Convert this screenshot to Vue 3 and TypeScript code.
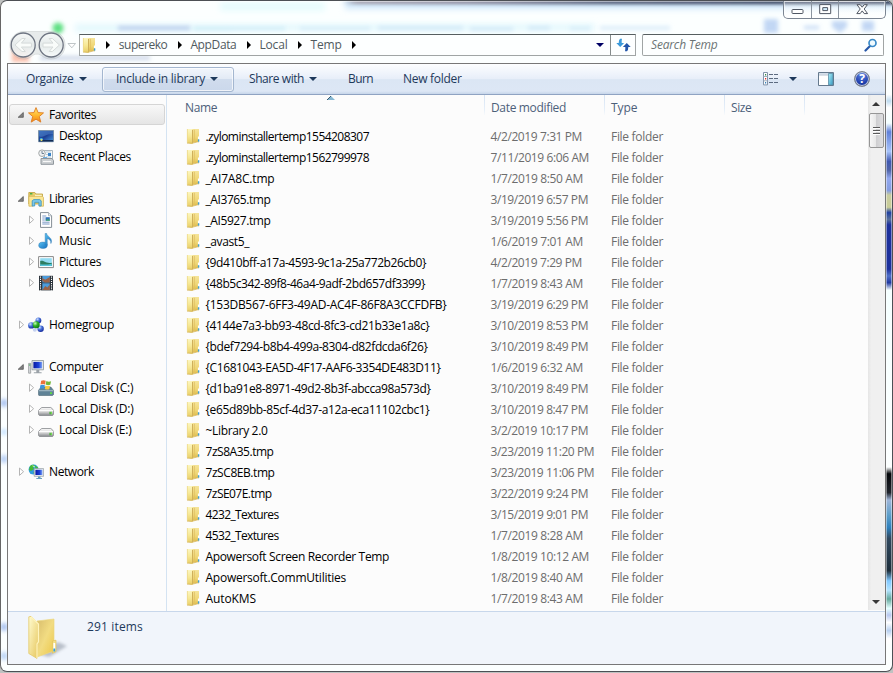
<script setup lang="ts">
interface TreeItem {
  label: string
  width: number
  icon: string
  level: 0 | 1
  arrow: 'open' | 'closed' | 'none'
  selected?: boolean
}

interface Entry {
  name: string
  width: number
  date: string
  dateWidth: number
}

// Tightens or loosens tracking so a label occupies a given width in pixels.
const vFit = {
  mounted(el: HTMLElement, binding: { value: number }) {
    const natural = el.getBoundingClientRect().width
    const count = (el.textContent ?? '').length
    if (count > 0) el.style.letterSpacing = `${((binding.value - natural) / count).toFixed(3)}px`
  },
}

const crumbs = [
  { label: 'supereko', width: 48.5 },
  { label: 'AppData', width: 46 },
  { label: 'Local', width: 28 },
  { label: 'Temp', width: 31 },
]

const groups: TreeItem[][] = [
  [
    { label: 'Favorites', width: 47, icon: 'star', level: 0, arrow: 'open', selected: true },
    { label: 'Desktop', width: 43, icon: 'desktop', level: 1, arrow: 'none' },
    { label: 'Recent Places', width: 72, icon: 'recent', level: 1, arrow: 'none' },
  ],
  [
    { label: 'Libraries', width: 44, icon: 'libraries', level: 0, arrow: 'open' },
    { label: 'Documents', width: 61, icon: 'document', level: 1, arrow: 'closed' },
    { label: 'Music', width: 32, icon: 'music', level: 1, arrow: 'closed' },
    { label: 'Pictures', width: 42, icon: 'pictures', level: 1, arrow: 'closed' },
    { label: 'Videos', width: 35, icon: 'videos', level: 1, arrow: 'closed' },
  ],
  [{ label: 'Homegroup', width: 65, icon: 'homegroup', level: 0, arrow: 'closed' }],
  [
    { label: 'Computer', width: 54, icon: 'computer', level: 0, arrow: 'open' },
    { label: 'Local Disk (C:)', width: 74.5, icon: 'systemdisk', level: 1, arrow: 'closed' },
    { label: 'Local Disk (D:)', width: 74.5, icon: 'disk', level: 1, arrow: 'closed' },
    { label: 'Local Disk (E:)', width: 72.5, icon: 'disk', level: 1, arrow: 'closed' },
  ],
  [{ label: 'Network', width: 45, icon: 'network', level: 0, arrow: 'closed' }],
]

const entries: Entry[] = [
  { name: '.zylominstallertemp1554208307', width: 163.5, date: '4/2/2019 7:31 PM', dateWidth: 91.5 },
  { name: '.zylominstallertemp1562799978', width: 163.5, date: '7/11/2019 6:06 AM', dateWidth: 98.5 },
  { name: '_AI7A8C.tmp', width: 69, date: '1/7/2019 8:50 AM', dateWidth: 92.5 },
  { name: '_AI3765.tmp', width: 65, date: '3/19/2019 6:57 PM', dateWidth: 97.5 },
  { name: '_AI5927.tmp', width: 65, date: '3/19/2019 5:56 PM', dateWidth: 97.5 },
  { name: '_avast5_', width: 43.5, date: '1/6/2019 7:01 AM', dateWidth: 92.5 },
  { name: '{9d410bff-a17a-4593-9c1a-25a772b26cb0}', width: 220.5, date: '4/2/2019 7:29 PM', dateWidth: 91.5 },
  { name: '{48b5c342-89f8-46a4-9adf-2bd657df3399}', width: 219.5, date: '1/7/2019 8:43 AM', dateWidth: 92.5 },
  { name: '{153DB567-6FF3-49AD-AC4F-86F8A3CCFDFB}', width: 241, date: '3/19/2019 6:29 PM', dateWidth: 97.5 },
  { name: '{4144e7a3-bb93-48cd-8fc3-cd21b33e1a8c}', width: 224, date: '3/10/2019 8:53 PM', dateWidth: 97.5 },
  { name: '{bdef7294-b8b4-499a-8304-d82fdcda6f26}', width: 222, date: '3/10/2019 8:49 PM', dateWidth: 97.5 },
  { name: '{C1681043-EA5D-4F17-AAF6-3354DE483D11}', width: 235, date: '1/6/2019 6:32 AM', dateWidth: 92.5 },
  { name: '{d1ba91e8-8971-49d2-8b3f-abcca98a573d}', width: 225, date: '3/10/2019 8:49 PM', dateWidth: 97.5 },
  { name: '{e65d89bb-85cf-4d37-a12a-eca11102cbc1}', width: 224, date: '3/10/2019 8:47 PM', dateWidth: 97.5 },
  { name: '~Library 2.0', width: 62, date: '3/2/2019 10:17 PM', dateWidth: 97.5 },
  { name: '7zS8A35.tmp', width: 68, date: '3/23/2019 11:20 PM', dateWidth: 103.5 },
  { name: '7zSC8EB.tmp', width: 69, date: '3/23/2019 11:06 PM', dateWidth: 103.5 },
  { name: '7zSE07E.tmp', width: 66, date: '3/22/2019 9:24 PM', dateWidth: 97.5 },
  { name: '4232_Textures', width: 73, date: '3/15/2019 9:01 PM', dateWidth: 97.5 },
  { name: '4532_Textures', width: 73, date: '1/7/2019 8:28 AM', dateWidth: 92.5 },
  { name: 'Apowersoft Screen Recorder Temp', width: 183.5, date: '1/8/2019 10:12 AM', dateWidth: 98.5 },
  { name: 'Apowersoft.CommUtilities', width: 140.5, date: '1/8/2019 8:40 AM', dateWidth: 92.5 },
  { name: 'AutoKMS', width: 50.5, date: '1/7/2019 8:43 AM', dateWidth: 92.5 },
]
</script>

<template>
  <div class="desktop">
    <!-- Shared icon artwork -->
    <svg class="defs" width="0" height="0" aria-hidden="true">
      <defs>
        <linearGradient id="gFold" x1="0" y1="0" x2="1" y2="1"><stop offset="0" stop-color="#fffbd0" /><stop offset="1" stop-color="#e6c65c" /></linearGradient>
        <linearGradient id="gLeaf" x1="0" y1="0" x2="0" y2="1"><stop offset="0" stop-color="#fcf6c0" /><stop offset=".5" stop-color="#f7e894" /><stop offset="1" stop-color="#e8cd66" /></linearGradient>
        <linearGradient id="gLeafBack" x1="0" y1="0" x2="0" y2="1"><stop offset="0" stop-color="#f5e49a" /><stop offset=".6" stop-color="#efd674" /><stop offset="1" stop-color="#dfbb4a" /></linearGradient>
        <linearGradient id="gFoldBack" x1="0" y1="0" x2="1" y2="1"><stop offset="0" stop-color="#d8bd6c" /><stop offset=".5" stop-color="#f2dc82" /><stop offset="1" stop-color="#ecc748" /></linearGradient>
        <linearGradient id="gStar" x1="0" y1="0" x2="0" y2="1"><stop offset="0" stop-color="#ffe878" /><stop offset=".55" stop-color="#ffb62c" /><stop offset="1" stop-color="#f08018" /></linearGradient>
        <linearGradient id="gBlue" x1="0" y1="0" x2="1" y2="1"><stop offset="0" stop-color="#2a62b8" /><stop offset=".5" stop-color="#1c3f94" /><stop offset="1" stop-color="#4c9ce0" /></linearGradient>
        <linearGradient id="gScreen" x1="0" y1="0" x2="1" y2="0"><stop offset="0" stop-color="#0818a0" /><stop offset=".6" stop-color="#1c40d8" /><stop offset="1" stop-color="#7ea4f4" /></linearGradient>
        <linearGradient id="gNote" x1="0" y1="0" x2="1" y2="1"><stop offset="0" stop-color="#58c0f0" /><stop offset="1" stop-color="#1670c0" /></linearGradient>
        <linearGradient id="gDisk" x1="0" y1="0" x2="0" y2="1"><stop offset="0" stop-color="#fafafa" /><stop offset=".5" stop-color="#dadada" /><stop offset="1" stop-color="#85888c" /></linearGradient>
        <linearGradient id="gPane" x1="0" y1="0" x2="1" y2="1"><stop offset="0" stop-color="#a8ecf6" /><stop offset="1" stop-color="#389cc4" /></linearGradient>
        <radialGradient id="gBallB" cx=".35" cy=".3" r=".7"><stop offset="0" stop-color="#cde0ff" /><stop offset=".5" stop-color="#4870d8" /><stop offset="1" stop-color="#1830a0" /></radialGradient>
        <radialGradient id="gBallG" cx=".35" cy=".3" r=".7"><stop offset="0" stop-color="#c8ffb8" /><stop offset=".5" stop-color="#30b028" /><stop offset="1" stop-color="#108010" /></radialGradient>
        <linearGradient id="gNav" x1="0" y1="0" x2="0" y2="1"><stop offset="0" stop-color="#f8faf9" /><stop offset=".5" stop-color="#e4eaea" /><stop offset="1" stop-color="#f8fbfb" /></linearGradient>
      </defs>

      <symbol id="i-folder" viewBox="0 0 16 16">
        <path d="M6 1h7v12.500L6 15z" fill="url(#gLeafBack)" />
        <path d="M1 1h4.800l.9 1v13.700H5L1 14.800z" fill="url(#gLeaf)" />
        <path d="M1.400 1v13.800" stroke="#ecd98c" stroke-width=".8" />
        <path d="M6.500 2v13.200" stroke="#cfb05a" stroke-width="1" />
        <path d="M8.400 1.800v11.800" stroke="#dfc062" stroke-width=".8" />
        <path d="M1 15.200h5.500l5-1.300h1.500" fill="none" stroke="#d2b254" stroke-width=".7" />
        <path d="M12.600 8.500v3" stroke="#fff" stroke-width="1.400" /><path d="M12.600 11.300v2.300" stroke="#3b9fd6" stroke-width="1.400" />
      </symbol>
      <symbol id="i-star" viewBox="0 0 16 16"><path d="m8 .6 2.100 5 5.400.3-4.200 3.600 1.500 5.600L8 12.200l-4.800 2.900 1.500-5.600L.5 5.900l5.400-.3z" fill="url(#gStar)" stroke="#df7c20" stroke-width=".9" stroke-linejoin="round" /></symbol>
      <symbol id="i-desktop" viewBox="0 0 16 16">
        <path d="M.5 2.500h15v11.200H.5z" fill="url(#gBlue)" stroke="#7b91a8" />
        <path d="M1 3v5c3 3 7-3 14-2V3z" fill="#5387cc" opacity=".5" />
        <path d="M1 12h14v1.500H1z" fill="#112b55" /><path d="m1.500 12.500 1-2.500 2 .3.500 1.700z" fill="#48bce8" /><circle cx="3.500" cy="12" r="1" fill="#f4df64" />
      </symbol>
      <symbol id="i-recent" viewBox="0 0 16 16">
        <path d="M6.500 1.500h8v9h-8z" fill="#f6fafc" stroke="#a9b5bd" /><path d="M8 3h5M8 5.500h5M8 8h5" stroke="#b9cbd8" />
        <path d="M10 4h3v3h-3z" fill="#3984ca" /><path d="M5 8h4v3H5z" fill="#6eaddf" />
        <path d="M3 9.500h11l1.500 2v3.800H3z" fill="#ccd0d3" stroke="#8f979d" /><path d="M5 12h8v1H5z" fill="#f9f9f9" />
        <circle cx="4" cy="4.200" r="3.300" fill="#eef1f3" stroke="#a4a8a8" /><path d="M4 2v2.500h2" fill="none" stroke="#718394" />
      </symbol>
      <symbol id="i-libraries" viewBox="0 0 16 16">
        <path d="M.8 3V1.500h6L8 3h6.500v10H.8z" fill="#e9cf6b" stroke="#bd9f3d" stroke-width=".8" />
        <path d="M2 2.800h2.400" stroke="#25a83f" stroke-width="1.200" /><path d="M7 3.800h6.800v2H7z" fill="#fffbd7" />
        <path d="M.8 5.300h13.700l1 1.200v8.700h-4v-4q0-1.400-3.300-1.400t-3.300 1.400v4h-4z" fill="#fbe693" stroke="#cfaf50" stroke-width=".7" />
        <path d="M4.200 15V9.800l1.600-1.200h6l1.400 1.200V15h-2.300v-3.700H6.700V15z" fill="#7cc8ea" stroke="#3890c0" stroke-width=".8" />
      </symbol>
      <symbol id="i-document" viewBox="0 0 16 16">
        <path d="M2.500.6h8l3.100 3V15.400H2.500z" fill="#fff" stroke="#858e96" /><path d="M10.500.6v3.200h3.100" fill="#e4eaf0" stroke="#9aa2aa" stroke-width=".7" />
        <path d="M4.300 4h4M4.300 6h2.500M4.300 8h2.500M4.300 10.200h7.300M4.300 12h7.300" stroke="#6c8cc0" stroke-width=".9" />
        <path d="M7.500 5.200h4.300v3.500H7.500z" fill="#2f74b8" /><path d="M7.500 8.700 9.300 7l2.500.7v1z" fill="#42a668" />
      </symbol>
      <symbol id="i-music" viewBox="0 0 16 16">
        <ellipse cx="5" cy="12.300" rx="4.300" ry="3.200" fill="url(#gNote)" stroke="#2a70aa" stroke-width=".4" />
        <path d="M7.200.4h1.400c.3 3.500 6.800 4.200 4.300 10.100.4-3.500-2.100-4.500-3.700-5v6.400H7.200z" fill="url(#gNote)" stroke="#2b78b3" stroke-width=".5" />
      </symbol>
      <symbol id="i-pictures" viewBox="0 0 16 16">
        <path d="M.6 2.600h14.800v11H.6z" fill="#fff" stroke="#898989" /><path d="M2.200 4.200h11.600v7.900H2.200z" fill="#92dbf2" />
        <path d="M2.200 7c4-1 5 3 11.600 1.800v3.300H2.200z" fill="#2c7d60" /><path d="M2.200 10.200q5 1 11.600-.5v2.400H2.200z" fill="#54c3d8" />
      </symbol>
      <symbol id="i-videos" viewBox="0 0 16 16">
        <path d="M1 .8h14v14.600H1z" fill="#293139" /><path d="M4.300 1h7.500v6.500H4.300zM4.300 8.300h7.500v6.800H4.300z" fill="#4c9bda" />
        <path d="m4.300 3 3 1.800L11.800 2v5.500H7L4.300 6zm0 12 3-4 2 1.500 2.500-3v5.600z" fill="#9a6247" />
        <path d="M2.500 1.500v14M13.500 1.500v14" stroke="#fff" stroke-width="1.100" stroke-dasharray="1.200 1" />
      </symbol>
      <symbol id="i-homegroup" viewBox="0 0 16 16">
        <circle cx="10.400" cy="3.400" r="2.900" fill="url(#gBallB)" /><circle cx="3.300" cy="8.400" r="3.200" fill="url(#gBallB)" /><circle cx="12.600" cy="11.700" r="3.200" fill="url(#gBallB)" /><circle cx="6.800" cy="12.800" r="2" fill="#c5d1f0" />
        <circle cx="8.200" cy="7.800" r="3.500" fill="url(#gBallG)" />
      </symbol>
      <symbol id="i-computer" viewBox="0 0 16 16">
        <path d="M.6 4.400h2.100v9.800H.6z" fill="#d7dadd" stroke="#8c8f91" stroke-width=".7" /><path d="M1.100 6h1.200" stroke="#27a83c" />
        <path d="M4 1.500h11.500v9.300H4z" fill="#e4e8eb" stroke="#8a9398" stroke-width=".8" /><path d="M5.400 2.900h8.700v6.400H5.400z" fill="url(#gScreen)" />
        <path d="M8.300 11h3v2.200h2.300v1H5.800v-1h2.500z" fill="#9ba2a8" />
      </symbol>
      <symbol id="i-disk" viewBox="0 0 16 16">
        <path d="m2.800 7.200 1-.7h9l1 .7 1.800 2.300v3.600l-1 1.400H1.400L.4 13.100V9.500z" fill="url(#gDisk)" stroke="#86898d" stroke-width=".8" />
        <path d="M.8 9.600h14.400" stroke="#fff" /><path d="M11.500 10.800h1.200v2.400h-1.200z" fill="#38aa24" /><path d="M13 10.800h1v2.400h-1z" fill="#72df4e" />
      </symbol>
      <symbol id="i-systemdisk" viewBox="0 0 16 16">
        <path d="m2.400 8 2-1h8.400l2.800 3.400v4l-1 1.100H.9l-.5-1.100v-4z" fill="#5f8296" stroke="#4d6876" stroke-width=".6" />
        <path d="M.8 10.300h14.500v.9H.8z" fill="#b5c7d0" /><path d="M12 12.300h2v1.800h-2z" fill="#5edb44" />
        <path d="M3.200.8Q5.500-.5 7.700.8L7 4.500Q5 3.400 2.500 4.500z" fill="#ed713a" /><path d="M8.400 1.100q2.300 1.200 4.700.2l-.8 3.500q-2.300 1-4.700-.2z" fill="#75b83a" />
        <path d="M2.300 5.200q2.200-1 4.600 0l-.7 3.600q-2-1-4.400 0z" fill="#3d94db" /><path d="M7.500 5.500q2.200 1.100 4.600.2l-.8 3.500q-2.200.9-4.500-.2z" fill="#fbcb3e" />
      </symbol>
      <symbol id="i-network" viewBox="0 0 16 16">
        <circle cx="5.600" cy="5.600" r="5" fill="#2d9fde" /><path d="M2 2q3-2.200 4.700-.8L5 3l1 2-3 2-2-1zM7 1.500l3 2-.5 2-2-1zM5 8l2 1-.6 1.500z" fill="#48bb35" /><path d="M4.500 1.800 7 3" stroke="#c9f3b0" />
        <path d="M6.200 4.600h9.400v7.700H6.200z" fill="#eaeef1" stroke="#8f999f" stroke-width=".7" /><path d="M7.400 5.800h7v5.200h-7z" fill="url(#gScreen)" />
        <path d="M10 12.500h2.500V14H14v1H8.300v-1H10z" fill="#6aa0bc" />
      </symbol>
    </svg>

    <div class="window">
      <!-- Blurred shapes showing through the glass frame -->
      <svg class="glass" viewBox="0 0 893 673" aria-hidden="true">
        <defs>
          <filter id="soft" x="-20%" y="-60%" width="140%" height="220%"><feGaussianBlur stdDeviation="3" /></filter>
          <filter id="fuzz" x="-10%" y="-80%" width="120%" height="260%"><feGaussianBlur stdDeviation="2.3" /></filter>
          <filter id="smear" x="-20%" y="-60%" width="140%" height="220%"><feGaussianBlur stdDeviation="5 1.6" /></filter>
          <linearGradient id="shade" gradientUnits="userSpaceOnUse" x1="330" y1="0" x2="893" y2="0"><stop offset="0" stop-color="#b0b0bc" /><stop offset=".25" stop-color="#9696a8" /><stop offset=".5" stop-color="#606b84" /><stop offset="1" stop-color="#3c4862" /></linearGradient>
          <linearGradient id="strip" gradientUnits="userSpaceOnUse" x1="0" y1="0" x2="0" y2="673">
            <stop offset=".14" stop-color="#fff" /><stop offset=".15" stop-color="#c0dcf0" /><stop offset=".16" stop-color="#fff" /><stop offset=".183" stop-color="#f4ffff" /><stop offset=".196" stop-color="#6080d8" /><stop offset=".225" stop-color="#a8c4fa" />
            <stop offset=".24" stop-color="#4058b0" /><stop offset=".253" stop-color="#5064a8" /><stop offset=".265" stop-color="#92a8ef" /><stop offset=".283" stop-color="#849ce0" /><stop offset=".29" stop-color="#c8cca0" /><stop offset=".308" stop-color="#c8cc98" />
            <stop offset=".316" stop-color="#2040a0" /><stop offset=".326" stop-color="#58709c" /><stop offset=".334" stop-color="#1c309c" /><stop offset=".4" stop-color="#1c309c" /><stop offset=".41" stop-color="#5070c8" /><stop offset=".42" stop-color="#2038a0" /><stop offset=".431" stop-color="#f4ffff" />
            <stop offset=".694" stop-color="#fcffff" /><stop offset=".704" stop-color="#030609" /><stop offset=".732" stop-color="#20242c" /><stop offset=".743" stop-color="#9eb5d8" /><stop offset=".765" stop-color="#5f9fca" /><stop offset=".784" stop-color="#2e80bc" />
            <stop offset=".8" stop-color="#30485e" /><stop offset=".848" stop-color="#1d2e3b" /><stop offset=".863" stop-color="#80c8ff" /><stop offset=".877" stop-color="#b4e4ff" /><stop offset=".89" stop-color="#65a89d" /><stop offset=".904" stop-color="#e5ffff" /><stop offset=".914" stop-color="#b8c8f0" /><stop offset=".925" stop-color="#fff" /><stop offset=".937" stop-color="#b8d0f0" /><stop offset=".949" stop-color="#fff" />
          </linearGradient>
        </defs>
        <g filter="url(#soft)">
          <path d="M345-3h548v12H345z" fill="#c4e2fa" opacity=".8" />
          <path d="M220 2h105v9H220z" fill="#d8fafb" opacity=".6" />
          <path d="M75 24h155v8H75zM230 24h365v7H230z" fill="#d4f4fb" opacity=".6" />
        </g>
        <path d="M350-4h565v8.500H350z" fill="url(#shade)" filter="url(#smear)" />
        <path d="M6 1.500h881" stroke="#fff" stroke-opacity=".45" />
        <g filter="url(#fuzz)">
          <ellipse cx="58" cy="28" rx="5.500" ry="5.500" fill="#5ee083" />
          <path d="M118 26h72v4h-72z" fill="#8fa4df" opacity=".5" /><path d="M194 27h91v3h-91z" fill="#b2ddf1" opacity=".5" />
          <path d="M300 27h70v3h-70zM378 26h85v4h-85zM470 27h43v4h-43zM528 26h22v4h-22zM570 27h20v3h-20zM600 26h70v4h-70z" fill="#bedcf4" opacity=".5" />
          <path d="M12 49h17v13H12z" fill="#fb9474" opacity=".6" /><path d="M40 56h110v4H40z" fill="#8f9fc8" opacity=".42" />
          <path d="M764 19h14v14h-14zM804 26h15v3h-15zM832 21h15v6l-7 6-8-6zM862 21h12v10h-12z" fill="#9bbced" opacity=".6" />
          <circle cx="4" cy="403" r="4" fill="#a7c1ef" /><circle cx="4" cy="432" r="3" fill="#bddeff" /><circle cx="4" cy="459" r="4" fill="#b5cef4" /><circle cx="4" cy="627" r="4" fill="#a7c1ef" /><circle cx="4" cy="656" r="4" fill="#b9d3f5" />
        </g>
        <path d="M886 94h6v550h-6z" fill="url(#strip)" />
        <path d="M886.500 94v550M891.500 94v550" stroke="#fff" stroke-opacity=".45" />
      </svg>

      <header class="caption">
        <div class="caption-buttons">
          <span class="cap minimize"><svg width="14" height="8" viewBox="0 0 14 8"><rect x="1" y="1.500" width="11" height="4" rx=".7" fill="#fff" stroke="#505763" /></svg></span>
          <span class="cap maximize"><svg width="13" height="11" viewBox="0 0 13 11"><path d="M.7.6h11v9h-11z" fill="#fff" stroke="#505763" /><path d="M3.800 3.600h4.800v3H3.800z" fill="#d3edfb" stroke="#505763" /></svg></span>
          <span class="cap close"><svg width="13" height="11" viewBox="0 0 13 11"><path d="M1 .7h3.200l2 2.500 2-2.500h3.200L8.200 5l3.400 4.600H8.200l-2-2.700-2 2.700H.8L4.200 5z" fill="#fff" stroke="#505763" stroke-width="1" stroke-linejoin="round" /></svg></span>
        </div>
      </header>

      <div class="address-row">
        <svg class="history" width="69" height="30" viewBox="0 0 69 30">
          <path d="M15 1.500h27c8 0 14 5 14 13.500s-6 14-14 14-9-5-14-5-6 5-13 5C6 29 1 22 1 15S7 1.500 15 1.500z" fill="#c9cece" stroke="#aab0b0" opacity=".4" />
          <circle cx="14.200" cy="15" r="12" fill="url(#gNav)" fill-opacity=".85" stroke="#6e7582" stroke-width="1.300" /><circle cx="42.200" cy="15" r="12" fill="url(#gNav)" stroke="#6e7582" stroke-width="1.300" />
          <path d="m6 15 7-6.500h3.300l-3.900 4.600h10v3.900h-10l3.900 4.500H13z" fill="#f9fcfa" stroke="#d6dbda" /><path d="m50.400 15-7-6.500h-3.300l3.900 4.600H34v3.900h10l-3.900 4.500h3.300z" fill="#f9fcfa" stroke="#d6dbda" />
          <path d="M59 13.500h7.500l-3.700 4.300z" fill="#fff" stroke="#afb7ba" stroke-width=".8" />
        </svg>
        <div class="address">
          <svg class="ico address-icon"><use href="#i-folder" /></svg>
          <div class="crumbs">
            <template v-for="crumb in crumbs" :key="crumb.label">
              <i class="crumb-arrow"></i>
              <span v-fit="crumb.width" class="fit">{{ crumb.label }}</span>
            </template>
            <i class="crumb-arrow"></i>
          </div>
          <i class="down navy"></i>
          <div class="refresh">
            <svg width="15" height="14" viewBox="0 0 15 14"><path d="M6 .8H4Q2.700 2 2.700 5H.3l3.900 4 3.900-4H5.700Q5.500 2.500 6 .8z" fill="#3b9ada" /><path d="M9 13.200h2q1.300-1.200 1.300-4.200h2.400l-3.900-4-3.900 4h2.400q.2 2.500-.3 4.200z" fill="#2456aa" /></svg>
          </div>
        </div>
        <div class="search">
          <span v-fit="66.500" class="fit search-text">Search Temp</span>
          <svg width="14" height="14" viewBox="0 0 14 14"><path d="m6 8-4.500 4.500" stroke="#2657a8" stroke-width="2.200" stroke-linecap="round" /><circle cx="8.500" cy="5" r="3.500" fill="#effbff" stroke="#3a8ac8" stroke-width="1.700" /></svg>
        </div>
      </div>

      <main class="client">
        <nav class="toolbar">
          <div class="tool organize"><span v-fit="47.500" class="fit">Organize</span><i class="down"></i></div>
          <div class="tool include"><span v-fit="89" class="fit">Include in library</span><i class="down"></i></div>
          <div class="tool share"><span v-fit="55" class="fit">Share with</span><i class="down"></i></div>
          <div class="tool burn"><span v-fit="25" class="fit">Burn</span></div>
          <div class="tool"><span v-fit="58.500" class="fit">New folder</span></div>
          <div class="tool-icons">
            <svg width="16" height="14" viewBox="0 0 16 14"><path d="M.5.5h4v12.400h-4z" fill="#fff" stroke="#8193a9" /><path d="M.5 4.500h4M.5 8.800h4" stroke="#a4b0bf" /><path d="M2 2h1.200v1.400H2z" fill="#398b48" /><path d="M2 6h1.200v1.400H2z" fill="#da302e" /><path d="M2 10h1.200v1.400H2z" fill="#3684bd" /><path d="M6 2.500h4M11 2.500h4M6 6.500h4M11 6.500h4M6 10.500h4M11 10.500h4" stroke="#5c6b80" /></svg>
            <i class="down"></i>
            <svg class="preview" width="16" height="14" viewBox="0 0 16 14"><path d="M.5.5h15v13H.5z" fill="#fff" stroke="#65798d" /><path d="M1 1h14v1.500H1z" fill="#d4dfeb" /><path d="M10.500 1.500h4.400v11.400h-4.400z" fill="url(#gPane)" stroke="#4b7f9b" stroke-width=".7" /><path d="M1 3h9" stroke="#a3b4c5" stroke-width=".8" /></svg>
            <span class="help">?</span>
          </div>
        </nav>

        <div class="panes">
          <aside class="tree">
            <div v-for="(group, index) in groups" :key="index" class="tree-group">
              <div v-for="item in group" :key="item.label" class="tree-item" :class="{ child: item.level === 1, selected: item.selected }">
                <svg class="twist" width="8" height="10" viewBox="0 0 8 10">
                  <path v-if="item.arrow === 'open'" d="M6.300 2.500v4.800H1.200z" fill="#808080" stroke="#585858" stroke-width=".8" />
                  <path v-else-if="item.arrow === 'closed'" d="M2.500 1v7.400L6.600 4.700z" fill="#fff" stroke="#b4b4b4" />
                </svg>
                <svg class="ico"><use :href="`#i-${item.icon}`" /></svg>
                <span v-fit="item.width" class="fit">{{ item.label }}</span>
              </div>
            </div>
          </aside>

          <section class="list">
            <div class="columns">
              <div class="col col-name"><span v-fit="32" class="fit">Name</span><svg class="sort" width="8" height="4" viewBox="0 0 8 4"><path d="M0 4 4 0l4 4z" fill="#85b7d2" /><path d="M0 4 4 0" stroke="#385a70" /></svg></div>
              <div class="col col-date"><span v-fit="75" class="fit">Date modified</span></div>
              <div class="col col-type"><span v-fit="26.500" class="fit">Type</span></div>
              <div class="col col-size"><span v-fit="20.500" class="fit">Size</span></div>
            </div>
            <div class="rows">
              <div v-for="entry in entries" :key="entry.name" class="row">
                <div class="cell-name"><svg class="ico"><use href="#i-folder" /></svg><span v-fit="entry.width" class="fit">{{ entry.name }}</span></div>
                <div class="cell-date"><span v-fit="entry.dateWidth" class="fit">{{ entry.date }}</span></div>
                <div class="cell-type"><span v-fit="52" class="fit">File folder</span></div>
              </div>
            </div>
          </section>

          <div class="scrollbar">
            <i class="scroll-up"></i>
            <div class="thumb"><i></i><i></i><i></i></div>
            <i class="scroll-down"></i>
          </div>
        </div>

        <footer class="details">
          <svg width="42" height="46" viewBox="0 0 42 46">
            <defs><filter id="shadow" x="-50%" y="-50%" width="200%" height="200%"><feGaussianBlur stdDeviation="1.8" /></filter></defs>
            <path d="m21 41 18-11-9-4-20 12z" fill="#818998" opacity=".5" filter="url(#shadow)" />
            <path d="m9 5 17-2v32L9 41z" fill="url(#gFoldBack)" stroke="#edd982" stroke-width=".7" />
            <path d="M.8.8 3 .4l7.500 7.500v18l-1.500 2v14.500L.8 37.500z" fill="url(#gFold)" stroke="#e4c96a" stroke-width=".8" />
            <path d="m3 .8 7.500 7.300v17.800l-1.500 2v14" fill="none" stroke="#fff4bd" stroke-width="1.200" />
            <path d="m24.500 25 3.500-.8v11.500l-3.500 1.500z" fill="#f5df87" stroke="#e2c35c" stroke-width=".7" /><path d="M26.300 27v6.500" stroke="#fff" stroke-width="1.800" /><path d="M26.300 32.500v3" stroke="#33a1e1" stroke-width="1.800" />
          </svg>
          <span v-fit="56" class="fit">291 items</span>
        </footer>
      </main>
    </div>
  </div>
</template>

<style>
body { margin: 0; overflow: hidden; }
</style>

<style scoped>
.desktop { width: 893px; height: 673px; background: #bfc2c1; font-family: "Open Sans", "Noto Sans", sans-serif; font-size: 12px; line-height: 21px; color: #000; }
.desktop * { box-sizing: border-box; }
.defs { position: absolute; }
.window { position: relative; display: flex; flex-direction: column; width: 893px; height: 672px; overflow: hidden; border: 1px solid #4c5055; border-left: 1px solid #666; border-radius: 7px; background: #fcffff; }
.glass { position: absolute; left: -1px; top: -1px; width: 893px; height: 673px; }
.fit { display: inline-block; white-space: pre; }
.ico { display: block; flex: none; width: 16px; height: 16px; }

.caption { position: relative; display: flex; justify-content: flex-end; height: 30px; padding-right: 6px; }
.caption-buttons { display: flex; width: 103px; height: 18px; border: 1px solid #7b8592; border-top: 0; border-radius: 0 0 5px 5px; background: linear-gradient(#ffffff33, #ffffffaa); box-shadow: inset 0 0 0 1px #ffffff88; }
.cap { display: flex; align-items: center; justify-content: center; border-right: 1px solid #8c95a0; }
.minimize { width: 28px; padding-top: 4px; }
.maximize { width: 27px; }
.close { width: 46px; border: 0; }

.address-row { position: relative; display: flex; align-items: center; height: 32px; padding: 0 8px 4px; }
.history { flex: none; margin: 0 1px 0 0; }
.address { display: flex; align-items: center; width: 557px; height: 22px; border: 1px solid #a0a5a5; border-top-color: #565e60; background: #fdffff; }
.address-icon { margin-left: 2px; }
.crumbs { display: flex; align-items: center; flex: 1; padding-left: 8px; color: #505a5e; line-height: 20px; }
.crumb-arrow { width: 4px; height: 0; border: solid transparent; border-width: 4px 0 4px 4px; border-left-color: #000; }
.crumbs .fit { margin: 0 10.300px 0 8.800px; }
.down { display: inline-block; flex: none; width: 0; height: 0; border: solid transparent; border-width: 4px 4px 0; border-top-color: #1e395b; }
.navy { border-top-color: #000064; margin-right: 6px; }
.refresh { display: flex; align-items: center; justify-content: center; width: 25px; height: 20px; border-left: 1px solid #858c8c; }
.search { display: flex; align-items: center; justify-content: space-between; width: 242px; height: 22px; margin-left: 6px; padding: 0 5px 0 8px; border: 1px solid #a0a5a5; border-top-color: #565e60; border-radius: 2px; background: #fdffff; line-height: 20px; }
.search-text { font-style: italic; color: #6c7474; }

.client { position: relative; display: flex; flex-direction: column; flex: none; width: 879px; height: 602px; margin-left: 6px; border: 1px solid #777; background: #fcfcfc; }
.toolbar { display: flex; align-items: center; flex: none; height: 31px; border-bottom: 1px solid #8fa3c2; background: linear-gradient(#fdfeff, #e7eef9 50%, #dbe6f4 52%, #dde7f5 90%, #c7d6ea); color: #1e395b; }
.tool { display: flex; align-items: center; line-height: 20px; }
.tool .down { margin-left: 5px; }
.organize { width: 94px; padding-left: 18px; }
.include { width: 132px; height: 25px; padding-left: 13px; border: 1px solid #a4b7d0; border-radius: 3px; background: linear-gradient(#f2f6fc, #e2eaf5 48%, #d0dced 50%, #cbd8eb); box-shadow: inset 0 0 0 1px #ffffffb3; }
.share { width: 114px; padding-left: 15px; }
.burn { width: 55px; }
.tool-icons { display: flex; align-items: center; margin-left: auto; padding-right: 15px; }
.tool-icons .down { margin-left: 10px; }
.preview { margin-left: 21px; }
.help { width: 16px; height: 16px; margin-left: 20px; border: 1px solid #7e8288; border-radius: 50%; background: radial-gradient(circle at 50% 20%, #5f85e4, #1c3cac 65%, #102c87); box-shadow: inset 0 0 0 1px #bcc6db; color: #fff; font-size: 12px; font-weight: 700; line-height: 14px; text-align: center; }

.panes { display: flex; height: 516px; flex: none; }
.tree { width: 159px; padding: 9px 1px 0; border-right: 1px solid #d4e3f2; }
.tree-group { margin-bottom: 21px; }
.tree-item { display: flex; align-items: center; height: 21px; padding-left: 8px; }
.tree-item.child { padding-left: 18px; }
.twist { flex: none; margin-right: 3px; }
.tree-item .fit { margin-left: 5px; }
.tree-item.selected { padding-left: 7px; border: 1px solid #d5d5d5; border-radius: 3px; background: linear-gradient(#f8f8f8, #e5e5e5); line-height: 19px; }

.list { flex: 1; }
.columns { display: flex; height: 31px; color: #4c607a; line-height: 25px; }
.col { position: relative; height: 20px; border-right: 1px solid; border-image: linear-gradient(#d5e2f2, #e6eff9 70%, #fcfcfc) 1; }
.col-name { width: 318px; padding-left: 18px; }
.col-date { width: 120px; padding-left: 6px; }
.col-type { width: 120px; padding-left: 6px; }
.col-size { width: 80px; padding-left: 6px; }
.sort { position: absolute; left: 160px; top: 1px; }
.row { display: flex; height: 21px; }
.cell-name { display: flex; align-items: center; width: 323.500px; padding-left: 19px; }
.cell-name .ico { margin-top: -2px; }
.cell-name .fit { margin-left: 3.500px; }
.cell-date { width: 120.500px; color: #6d6d6d; }
.cell-type { color: #6d6d6d; }

.scrollbar { display: flex; flex-direction: column; align-items: center; width: 17px; height: 515px; padding-right: 1px; background: linear-gradient(90deg, #e5e5e5, #f0f0f0 20%, #f0f0f0); }
.scroll-up { border: solid transparent; border-width: 0 4px 4px; border-bottom-color: #383838; margin: 7px 0; }
.thumb { display: flex; flex-direction: column; align-items: center; justify-content: center; gap: 1px; width: 15px; height: 35px; border: 1px solid #969696; border-radius: 2px; background: linear-gradient(90deg, #f7f7f7, #e8e8e8 45%, #cfcfd1 50%, #dedee0); }
.thumb i { width: 7px; height: 2px; border-top: 1px solid #5b5b5b; background: #fff; }
.scroll-down { border: solid transparent; border-width: 4px 4px 0; border-top-color: #383838; margin-top: auto; margin-bottom: 6px; }

.details { display: flex; flex: 1; padding: 4px 20px 0; border-top: 1px solid #c8d7eb; background: #f1f5fb; color: #1e395b; }
.details .fit { margin-left: 17px; }
</style>
